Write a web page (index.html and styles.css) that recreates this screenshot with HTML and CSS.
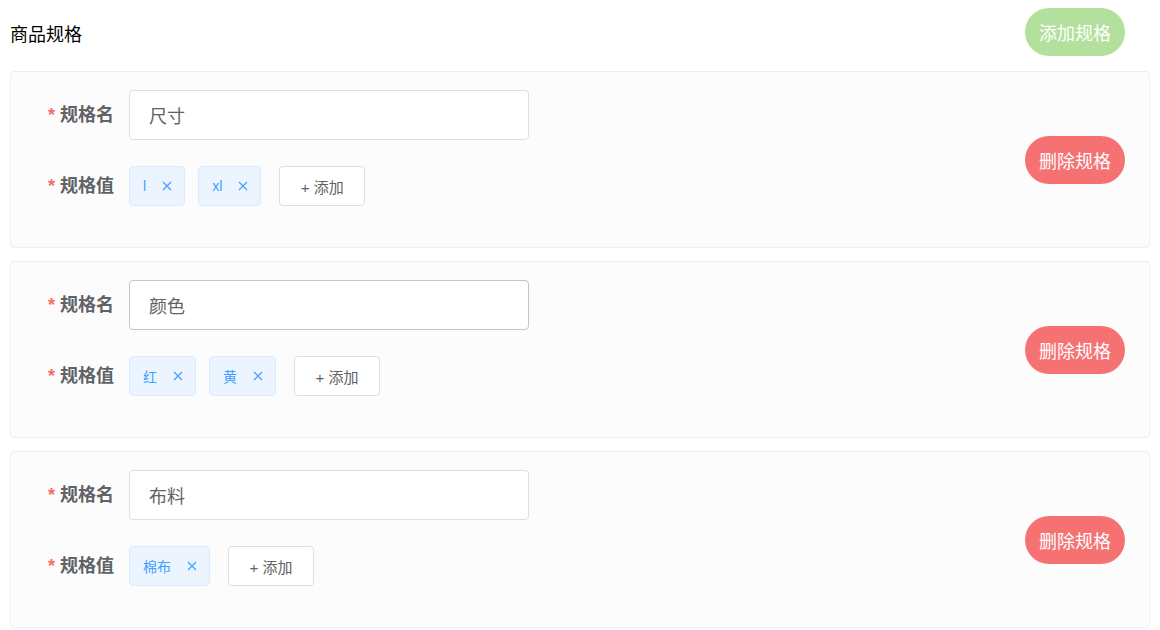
FILE: index.html
```html
<!DOCTYPE html>
<html lang="zh">
<head>
<meta charset="utf-8">
<title>商品规格</title>
<link rel="stylesheet" href="styles.css">
</head>
<body>
<div class="page">
  <div class="header">
    <div class="title">商品规格</div>
    <button class="btn-round btn-add">添加规格</button>
  </div>

  <div class="card">
    <div class="form">
      <div class="row row-name">
        <label class="label"><span class="req">*</span>规格名</label>
        <input class="input" value="尺寸">
      </div>
      <div class="row row-values">
        <label class="label"><span class="req">*</span>规格值</label>
        <div class="tags">
          <span class="tag">l<span class="close"><svg viewBox="0 0 10 10" width="10" height="10"><path d="M1 1L9 9M9 1L1 9"/></svg></span></span>
          <span class="tag">xl<span class="close"><svg viewBox="0 0 10 10" width="10" height="10"><path d="M1 1L9 9M9 1L1 9"/></svg></span></span>
          <button class="btn-new">+ 添加</button>
        </div>
      </div>
    </div>
    <button class="btn-round btn-del">删除规格</button>
  </div>

  <div class="card">
    <div class="form">
      <div class="row row-name">
        <label class="label"><span class="req">*</span>规格名</label>
        <input class="input input-hover" value="颜色">
      </div>
      <div class="row row-values">
        <label class="label"><span class="req">*</span>规格值</label>
        <div class="tags">
          <span class="tag">红<span class="close"><svg viewBox="0 0 10 10" width="10" height="10"><path d="M1 1L9 9M9 1L1 9"/></svg></span></span>
          <span class="tag">黄<span class="close"><svg viewBox="0 0 10 10" width="10" height="10"><path d="M1 1L9 9M9 1L1 9"/></svg></span></span>
          <button class="btn-new">+ 添加</button>
        </div>
      </div>
    </div>
    <button class="btn-round btn-del">删除规格</button>
  </div>

  <div class="card">
    <div class="form">
      <div class="row row-name">
        <label class="label"><span class="req">*</span>规格名</label>
        <input class="input" value="布料">
      </div>
      <div class="row row-values">
        <label class="label"><span class="req">*</span>规格值</label>
        <div class="tags">
          <span class="tag">棉布<span class="close"><svg viewBox="0 0 10 10" width="10" height="10"><path d="M1 1L9 9M9 1L1 9"/></svg></span></span>
          <button class="btn-new">+ 添加</button>
        </div>
      </div>
    </div>
    <button class="btn-round btn-del">删除规格</button>
  </div>
</div>
</body>
</html>
```

FILE: styles.css
```css
* { box-sizing: border-box; }
html, body {
  margin: 0;
  padding: 0;
  background: #ffffff;
  font-family: "Liberation Sans", "Noto Sans CJK SC", sans-serif;
}
.page {
  padding: 8px 10px 0 10px;
}
.header {
  display: flex;
  justify-content: space-between;
  align-items: center;
  height: 48px;
  margin-bottom: 15px;
}
.title {
  font-size: 18px;
  color: #000;
  padding-top: 2px;
}
.btn-round {
  width: 100px;
  height: 48px;
  border-radius: 24px;
  border: none;
  color: #fff;
  font-size: 18px;
  font-family: "Liberation Sans", "Noto Sans CJK SC", sans-serif;
  padding: 0;
  cursor: pointer;
}
.btn-add {
  background: #b3e19d;
  margin-right: 25px;
}
.btn-del {
  background: #f67272;
  align-self: center;
}
.card {
  display: flex;
  justify-content: space-between;
  height: 177px;
  margin-bottom: 13px;
  border: 1px solid #ebeef5;
  border-radius: 4px;
  background: #fcfcfc;
  padding: 0 24px 0 0;
}
.form {
  display: flex;
  flex-direction: column;
  gap: 26px;
  padding-top: 18px;
}
.row {
  display: flex;
  align-items: center;
}
.row-name { height: 50px; }
.row-values { height: 40px; }
.label {
  width: 118px;
  padding-right: 15px;
  text-align: right;
  font-size: 18px;
  line-height: 24px;
  font-weight: bold;
  color: #606266;
}
.req {
  color: #f56c6c;
  margin-right: 5px;
  font-weight: bold;
}
.input {
  width: 400px;
  height: 50px;
  border: 1px solid #dcdfe6;
  border-radius: 4px;
  background: #fff;
  padding: 0 19px 1px 19px;
  font-size: 18px;
  color: #606266;
  font-family: "Liberation Sans", "Noto Sans CJK SC", sans-serif;
  outline: none;
}
.input-hover { border-color: #c0c4cc; }
.tags {
  display: flex;
  align-items: center;
}
.tag {
  display: inline-flex;
  align-items: center;
  height: 40px;
  padding: 0 12px 0 13px;
  margin-right: 13px;
  background: #ecf5ff;
  border: 1px solid #d9ecff;
  border-radius: 4px;
  color: #409eff;
  font-size: 14px;
}
.close {
  display: inline-flex;
  margin-left: 16px;
}
.close svg {
  fill: none;
  stroke: #409eff;
  stroke-width: 1.2;
}
.btn-new {
  width: 86px;
  height: 40px;
  margin-left: 5px;
  background: #fff;
  border: 1px solid #dcdfe6;
  border-radius: 4px;
  color: #606266;
  font-size: 15px;
  font-family: "Liberation Sans", "Noto Sans CJK SC", sans-serif;
  padding: 0;
}
```
